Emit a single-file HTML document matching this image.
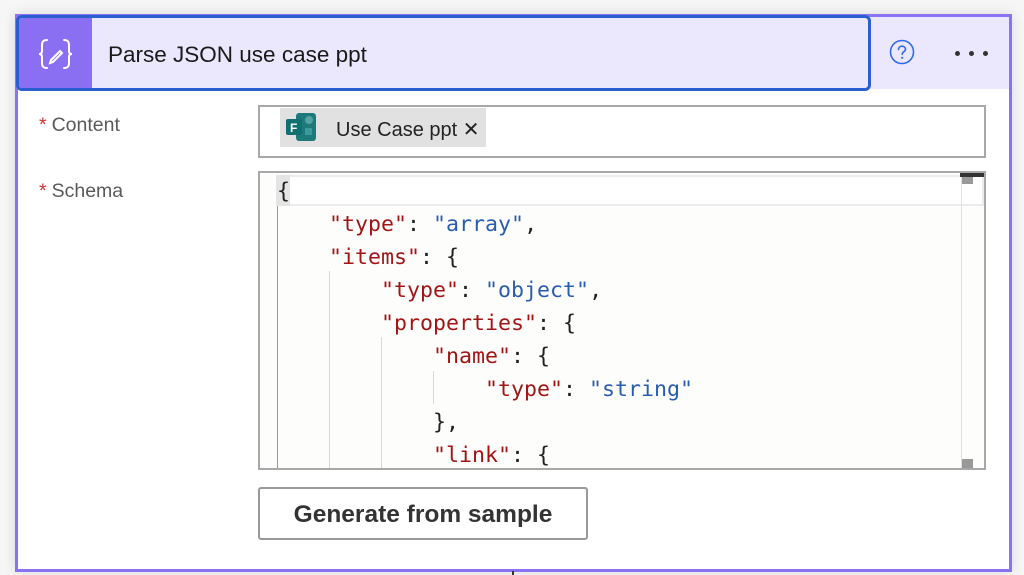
<!DOCTYPE html>
<html><head><meta charset="utf-8"><style>
*{margin:0;padding:0;box-sizing:border-box}
body{width:1024px;height:575px;background:#f6f6f6;position:relative;overflow:hidden;font-family:"Liberation Sans",sans-serif}
.card{position:absolute;left:15px;top:14px;width:997px;height:558px;background:#fff;border:3px solid #8a72f2;box-shadow:0 0 12px rgba(0,0,0,.12)}
.hdrbg{position:absolute;left:18px;top:17px;width:991px;height:72px;background:#ebe8fd}
.hdr{position:absolute;left:16px;top:15px;width:855px;height:76px;border:3px solid #2b5fcf;border-radius:6px;background:#ebe8fd;overflow:hidden}
.ico{position:absolute;left:0;top:0;width:73px;height:70px;background:#8a6ff3}
.title{position:absolute;left:108px;top:42px;font-size:22.5px;color:#1a1a1a}
.lbl{position:absolute;left:39px;font-size:19.5px;color:#5a5a5a}
.lbl b{color:#d13438;font-weight:normal;margin-right:5px}
.box{position:absolute;border:2px solid #a8a8a8;background:#fff}
.chip{position:absolute;left:280px;top:108px;width:206px;height:39px;background:#e1e1e1}
.chip span{position:absolute;left:56px;top:9px;font-size:20px;color:#222}
.code{position:absolute;font-family:"DejaVu Sans Mono",monospace;font-size:21.6px;color:#222;white-space:pre;line-height:33px}
.k{color:#a31515}.s{color:#2a5db0}
.g{position:absolute;width:1px;background:#d8d8d8}
.btn{position:absolute;left:258px;top:487px;width:330px;height:53px;border:2px solid #999;border-radius:3px;background:#fff;font-weight:bold;font-size:24.5px;color:#333;text-align:center;line-height:51px}
</style></head><body>
<div class="card"></div>
<div class="hdrbg"></div>
<div class="hdr"><div class="ico">
<svg width="73" height="70" viewBox="0 0 73 70"><g fill="none" stroke="#fff" stroke-width="2" stroke-linecap="round"><path d="M28 22c-4 0-5 2-5 5v6c0 2-1 3-3 3 2 0 3 1 3 3v6c0 3 1 5 5 5"/><path d="M45 22c4 0 5 2 5 5v6c0 2 1 3 3 3-2 0-3 1-3 3v6c0 3-1 5-5 5"/><path d="M32 42l9-9 2 2-9 9-3 1z"/></g></svg>
</div></div>
<div class="title">Parse JSON use case ppt</div>
<svg style="position:absolute;left:889px;top:39px" width="26" height="26" viewBox="0 0 26 26"><circle cx="13" cy="13" r="11.5" fill="none" stroke="#2e6be6" stroke-width="1.6"/><path d="M9.5 10.5c0-2 1.6-3.3 3.5-3.3s3.5 1.3 3.5 3.1c0 2.4-3.3 2.6-3.3 5" fill="none" stroke="#2e6be6" stroke-width="1.6" stroke-linecap="round"/><circle cx="13.2" cy="18.8" r="1.1" fill="#2e6be6"/></svg>
<div style="position:absolute;left:955px;top:51px;width:5px;height:5px;border-radius:50%;background:#333;box-shadow:14px 0 #333,28px 0 #333"></div>
<div class="lbl" style="top:114px"><b>*</b>Content</div>
<div class="lbl" style="top:180px"><b>*</b>Schema</div>
<div class="box" style="left:258px;top:105px;width:728px;height:53px"></div>
<div class="chip"><svg style="position:absolute;left:4px;top:3px" width="34" height="34" viewBox="0 0 34 34"><rect x="12" y="2" width="20" height="28" rx="3" fill="#1e7a7a"/><circle cx="25" cy="9" r="4" fill="#52a3a3"/><rect x="21" y="17" width="7" height="7" fill="#3d9a9a"/><rect x="2" y="8" width="16" height="16" rx="2" fill="#107070"/><text x="6" y="21" font-size="12" font-family="Liberation Sans" font-weight="bold" fill="#fff">F</text></svg><span>Use Case ppt ✕</span></div>
<div class="box" style="left:258px;top:171px;width:728px;height:299px;background:#fdfdfc;overflow:hidden">
<div style="position:absolute;left:17px;top:2px;width:707px;height:31px;border:2px solid #ececec;background:#fff"></div>
<div style="position:absolute;left:16px;top:2px;width:14px;height:31px;background:#e4e4e4"></div>
<div class="g" style="left:17px;top:33px;height:270px;background:#999"></div>
<div class="g" style="left:69px;top:98px;height:200px"></div>
<div class="g" style="left:121px;top:164px;height:140px"></div>
<div class="g" style="left:173px;top:198px;height:33px"></div>
<div class="g" style="left:701px;top:0;height:300px;background:#e0e0e0"></div>
<div style="position:absolute;left:700px;top:0;width:25px;height:4px;background:#333"></div>
<div style="position:absolute;left:702px;top:4px;width:11px;height:7px;background:#999"></div>
<div style="position:absolute;left:702px;top:286px;width:11px;height:11px;background:#999"></div>
<div class="code" style="left:17px;top:2px">{
    <span class="k">"type"</span>: <span class="s">"array"</span>,
    <span class="k">"items"</span>: {
        <span class="k">"type"</span>: <span class="s">"object"</span>,
        <span class="k">"properties"</span>: {
            <span class="k">"name"</span>: {
                <span class="k">"type"</span>: <span class="s">"string"</span>
            },
            <span class="k">"link"</span>: {</div>
</div>
<div class="btn">Generate from sample</div>
<div style="position:absolute;left:512px;top:571px;width:2px;height:4px;background:#333"></div>
</body></html>
